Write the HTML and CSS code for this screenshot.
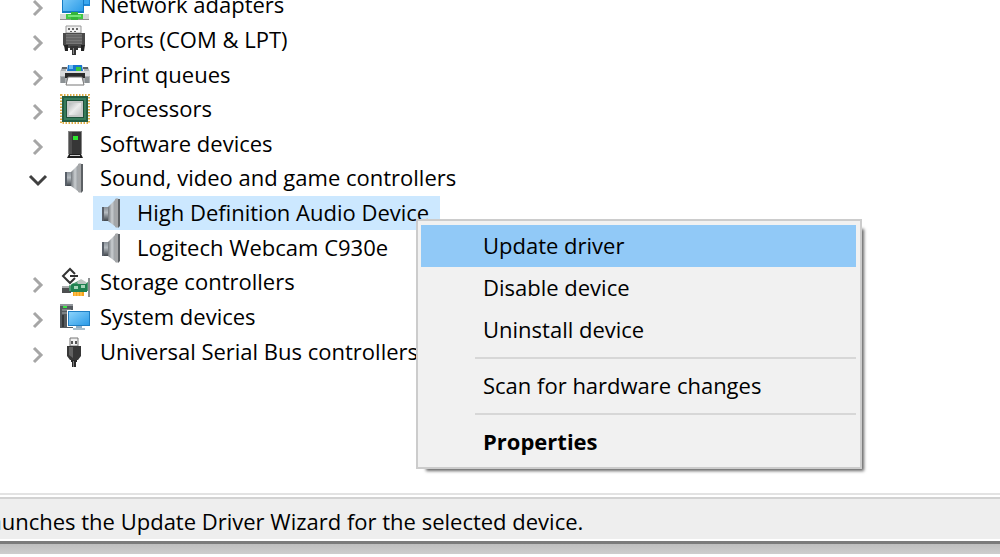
FILE: index.html
```html
<!DOCTYPE html>
<html lang="en">
<head>
	<meta charset="UTF-8">
	<title>Device Manager</title>
	<link rel="stylesheet" href="styles.css">
</head>
<body>
	<!-- shared shapes -->
	<svg class="defs" aria-hidden="true">
		<defs>
			<linearGradient id="screen" x1="0" y1="0" x2="1" y2="1">
				<stop offset="0" stop-color="#8bd3fb"/>
				<stop offset="1" stop-color="#2b9be8"/>
			</linearGradient>
			<linearGradient id="metal" x1="0" y1="0" x2="1" y2="1">
				<stop offset="0" stop-color="#b5b9ba"/>
				<stop offset="0.5" stop-color="#ececec"/>
				<stop offset="1" stop-color="#c4c6c6"/>
			</linearGradient>
			<linearGradient id="cone" x1="0" y1="0" x2="1" y2="0">
				<stop offset="0" stop-color="#74797e"/>
				<stop offset="0.5" stop-color="#c9cdd0"/>
				<stop offset="1" stop-color="#8b8f93"/>
			</linearGradient>
			<linearGradient id="box" x1="0" y1="0" x2="0" y2="1">
				<stop offset="0" stop-color="#8b9299"/>
				<stop offset="0.4" stop-color="#b5bbc0"/>
				<stop offset="1" stop-color="#3f454b"/>
			</linearGradient>
		</defs>
		<symbol id="chevron" viewBox="0 0 16 20">
			<path d="M4 3l7 7-7 7" fill="none" stroke="#a6a6a6" stroke-width="3"/>
		</symbol>
		<symbol id="chevron-down" viewBox="0 0 20 20">
			<path d="M2 5l8 8 8-8" fill="none" stroke="#404040" stroke-width="3"/>
		</symbol>
		<symbol id="speaker" viewBox="0 0 30 30">
			<path d="M5 9h7v14H5z" fill="url(#box)"/>
			<path d="M5 9h2v14H5z" fill="#596069"/>
			<path d="M11 9l8-8v28l-8-6z" fill="url(#cone)"/>
			<path d="M18 1q3-2 4 1v26q-1 3-4 1z" fill="#a5a7a9"/>
			<path d="M21 1h2v27l-2 2z" fill="#5c6064"/>
		</symbol>
	</svg>

	<main>
		<ul class="tree">
			<li>
				<button class="toggle" aria-label="Expand"><svg><use href="#chevron"/></svg></button>
				<span class="node">
					<svg class="icon" viewBox="0 0 30 30">
						<path d="M21 0h9v16h-7z" fill="#1c87d6"/>
						<path d="M23 0h6v14h-6z" fill="#3ba7ee"/>
						<path d="M2 1h22v22H2z" fill="#167bc4"/>
						<path d="M3 2h20v19H3z" fill="url(#screen)"/>
						<path d="M0 24h29v6H0z" fill="#d6d8d6"/>
						<path d="M0 29h29v1H0z" fill="#8e918e"/>
						<path d="M6 24h17v5H6z" fill="#42c844"/>
						<path d="M11 22h7v8h-7z" fill="#35b43a"/>
						<path d="M8 25h13v2H8z" fill="#75e577"/>
					</svg>
					<span class="label">Network adapters</span>
				</span>
			</li>
			<li>
				<button class="toggle" aria-label="Expand"><svg><use href="#chevron"/></svg></button>
				<span class="node">
					<svg class="icon" viewBox="0 0 30 30">
						<path d="M6 1h15v7H6z" fill="#f2f2f2" stroke="#999"/>
						<path d="M8 3h2v2H8zM12 3h2v2h-2zM16 3h2v2h-2zM10 6h2v1h-2zM14 6h2v1h-2z" fill="#666"/>
						<path d="M3 8h22v12l-3 3H6l-3-3z" fill="#4a4a4a"/>
						<path d="M6 9h16v10H6z" fill="#777"/>
						<path d="M6 11h16M6 14h16M6 17h16" stroke="#555"/>
						<path d="M4 20h4v6H5zM21 20h4l-1 6h-3z" fill="#222"/>
						<path d="M10 21h8v4h-2v5h-4v-5h-2z" fill="#333"/>
						<path d="M13 23h1v6h-1z" fill="#888"/>
					</svg>
					<span class="label">Ports (COM &amp; LPT)</span>
				</span>
			</li>
			<li>
				<button class="toggle" aria-label="Expand"><svg><use href="#chevron"/></svg></button>
				<span class="node">
					<svg class="icon" viewBox="0 0 30 30">
						<path d="M2 7h5l-1 4h18l-1-4h5l2 5v11H0V12z" fill="#aeb2b5"/>
						<path d="M0 11h30v5H0z" fill="#d9dbdd"/>
						<path d="M2 7h5v2H2zM23 7h5v2h-5z" fill="#5f6366"/>
						<path d="M5 13h20v5H5z" fill="#292929"/>
						<path d="M1 17h4v6H1zM25 17h4v6h-4z" fill="#8b9093"/>
						<path d="M8 17h14l2 8H6z" fill="#fff" stroke="#777"/>
						<path d="M8 5h14l1 6H7z" fill="#1976ce"/>
						<path d="M9 5h4v4H9z" fill="#67b9f1"/>
						<path d="M16 7h5v4h-5z" fill="#37c93c"/>
					</svg>
					<span class="label">Print queues</span>
				</span>
			</li>
			<li>
				<button class="toggle" aria-label="Expand"><svg><use href="#chevron"/></svg></button>
				<span class="node">
					<svg class="icon" viewBox="0 0 30 30">
						<rect x="1" y="1" width="28" height="28" fill="none" stroke="#dfac46" stroke-width="2" stroke-dasharray="1.500 1.500"/>
						<path d="M2 2h26v26H2z" fill="#225d43"/>
						<path d="M4 4h22v22H4z" fill="#377b5a"/>
						<path d="M6 6h18v18H6z" fill="#1d5039"/>
						<path d="M7 7h16v16H7z" fill="#c6c8c7"/>
						<path d="M9 9h12v12H9z" fill="url(#metal)"/>
					</svg>
					<span class="label">Processors</span>
				</span>
			</li>
			<li>
				<button class="toggle" aria-label="Expand"><svg><use href="#chevron"/></svg></button>
				<span class="node">
					<svg class="icon" viewBox="0 0 30 30">
						<path d="M8 2h14v23H8z" fill="#858585"/>
						<path d="M9 3h12v22H9z" fill="#363636"/>
						<path d="M9 3h3v22H9z" fill="#4d4d4d"/>
						<path d="M13 7h5v4h-5z" fill="#2ee830"/>
						<path d="M9 25h12l2 4H7z" fill="#1e1e1e"/>
						<path d="M10 26h10v1H10z" fill="#ccc"/>
					</svg>
					<span class="label">Software devices</span>
				</span>
			</li>
			<li>
				<button class="toggle open" aria-label="Collapse"><svg><use href="#chevron-down"/></svg></button>
				<span class="node">
					<svg class="icon"><use href="#speaker"/></svg>
					<span class="label">Sound, video and game controllers</span>
				</span>
			</li>
			<li class="child">
				<span class="node selected">
					<svg class="icon"><use href="#speaker"/></svg>
					<span class="label">High Definition Audio Device</span>
				</span>
			</li>
			<li class="child">
				<span class="node">
					<svg class="icon"><use href="#speaker"/></svg>
					<span class="label">Logitech Webcam C930e</span>
				</span>
			</li>
			<li>
				<button class="toggle" aria-label="Expand"><svg><use href="#chevron"/></svg></button>
				<span class="node">
					<svg class="icon" viewBox="0 0 30 30">
						<path d="M2 19h9v7H2z" fill="#4d4f50"/>
						<path d="M2 19h9v2H2z" fill="#a9acad"/>
						<path d="M9 17l5-1 6-3 6 3 2-1v9H9z" fill="#4d9b70"/>
						<path d="M17 15l4-3 5 3v2h-8z" fill="#bcc4c0"/>
						<path d="M11 17h16v8H11z" fill="#1f8150"/>
						<path d="M14 19h4v3h-4zM21 18h4v3h-4z" fill="#a5d5b9"/>
						<path d="M28 11h2v19h-2z" fill="#8d9092"/>
						<path d="M13 25h11v4H13z" fill="#f6a31b"/>
						<path d="M15 25v4M18 25v4M21 25v4" stroke="#ffd26f"/>
						<path d="M15 7l-5-5-7 7 7 7 5-5M10 9h9" fill="none" stroke="#fff" stroke-width="4"/>
						<path d="M15 7l-5-5-7 7 7 7 5-5M10 9h8" fill="none" stroke="#333" stroke-width="2"/>
					</svg>
					<span class="label">Storage controllers</span>
				</span>
			</li>
			<li>
				<button class="toggle" aria-label="Expand"><svg><use href="#chevron"/></svg></button>
				<span class="node">
					<svg class="icon" viewBox="0 0 30 30">
						<path d="M0 2h13v24H0z" fill="#555a5e"/>
						<path d="M0 2h13v2H0z" fill="#92979b"/>
						<path d="M3 4h4v2H3z" fill="#3ce446"/>
						<path d="M2 8h9M2 11h9" stroke="#a6abaf"/>
						<path d="M2 13h2v12H2z" fill="#343739"/>
						<path d="M7 8h24v17H7z" fill="#fff"/>
						<path d="M8 9h22v15H8z" fill="#1f7fc4"/>
						<path d="M9 10h20v13H9z" fill="url(#screen)"/>
						<path d="M16 24h6v2h-6z" fill="#8dafc7"/>
						<path d="M13 26h12v2H13z" fill="#a9bfcd"/>
					</svg>
					<span class="label">System devices</span>
				</span>
			</li>
			<li>
				<button class="toggle" aria-label="Expand"><svg><use href="#chevron"/></svg></button>
				<span class="node">
					<svg class="icon" viewBox="0 0 30 30">
						<path d="M10 1h8v8h-8z" fill="#f1f1f1" stroke="#777"/>
						<path d="M11 4h2v3h-2zM15 4h2v3h-2z" fill="#555"/>
						<path d="M7 9h14v10l-3 4h-8l-3-4z" fill="#373737"/>
						<path d="M9 10h4v11l-4-3z" fill="#626262"/>
						<path d="M11 23h6v2h-1v5h-4v-5h-1z" fill="#292929"/>
						<path d="M13 24h1v6h-1z" fill="#808080"/>
					</svg>
					<span class="label">Universal Serial Bus controllers</span>
				</span>
			</li>
		</ul>

		<div class="menu" role="menu">
			<button class="active" role="menuitem">Update driver</button>
			<button role="menuitem">Disable device</button>
			<button role="menuitem">Uninstall device</button>
			<hr>
			<button role="menuitem">Scan for hardware changes</button>
			<hr>
			<button class="default" role="menuitem">Properties</button>
		</div>
	</main>

	<footer>
		<p class="status">Launches the Update Driver Wizard for the selected device.</p>
		<div class="edge"></div>
	</footer>
</body>
</html>
```
FILE: styles.css
```css
* {
	margin: 0;
	padding: 0;
	box-sizing: border-box;
}
body {
	display: flex;
	flex-direction: column;
	min-height: 100vh;
	overflow: hidden;
	background: #fff;
	color: #000;
	font: 22px/32px "Segoe UI", "Open Sans", "Noto Sans", sans-serif;
}
button {
	border: 0;
	background: none;
	color: inherit;
	font: inherit;
}
.defs {
	position: absolute;
	width: 0;
	height: 0;
}
main {
	flex: 1;
	position: relative;
}

/* device tree */
.tree {
	display: grid;
	grid-auto-rows: 1fr;
	height: 381px;
	margin-top: -12px;
	list-style: none;
	white-space: nowrap;
}
.tree li {
	display: flex;
	align-items: center;
	padding-left: 28px;
}
.tree .child {
	padding-left: 93px;
}
.toggle {
	width: 28px;
	height: 20px;
	padding-left: 2px;
	margin-top: 6px;
}
.toggle svg {
	display: block;
	width: 16px;
	height: 20px;
}
.toggle.open {
	padding-left: 0;
}
.toggle.open svg {
	width: 20px;
}
.node {
	display: flex;
	align-items: center;
	gap: 10px;
	height: 34px;
	padding: 0 11px 0 4px;
}
.label {
	padding-bottom: 2px;
}
.selected {
	background: #cce8ff;
}
.icon {
	width: 30px;
	height: 30px;
}

/* context menu */
.menu {
	position: absolute;
	top: 219px;
	left: 416px;
	width: 446px;
	padding: 4px 4px 4px 3px;
	border: 2px solid #ccc;
	background: #f1f1f1;
	box-shadow: 6px 6px 3px -4px #666;
}
.menu button {
	display: block;
	width: 100%;
	height: 42px;
	padding: 0 0 2px 62px;
	text-align: left;
}
.menu .active {
	background: #91c9f7;
}
.menu .default {
	font-weight: bold;
}
.menu hr {
	height: 2px;
	margin: 6px 0 6px 54px;
	border: 0;
	background: #d7d7d7;
}

/* status bar */
footer {
	border-top: 2px solid #e3e3e3;
	padding: 2px 0 3px;
}
.status {
	height: 42px;
	border-top: 2px solid #d2d2d2;
	background: #eee;
	line-height: 44px;
	text-indent: -22px;
	white-space: nowrap;
}
.edge {
	height: 13px;
	margin-top: 2px;
	border-top: 3px solid #7b7b7b;
	background: linear-gradient(#bebebe, #cecece);
}
```
